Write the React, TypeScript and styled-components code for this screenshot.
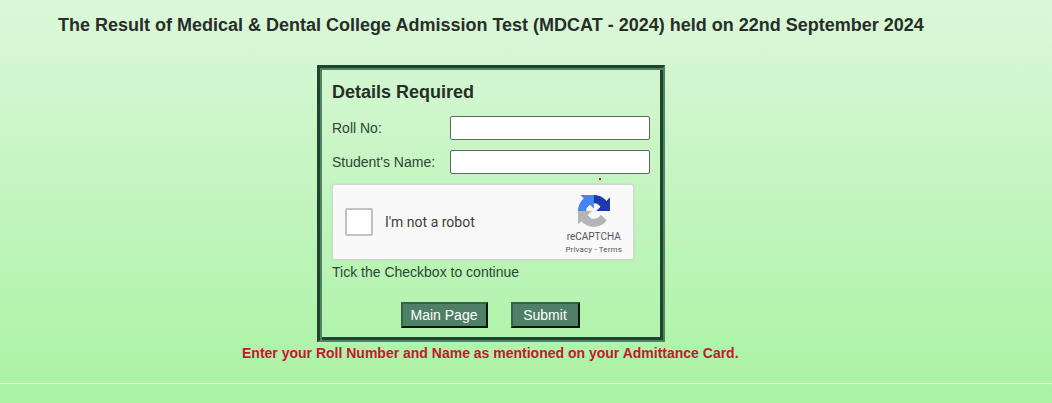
import React from "react";
import styled, { createGlobalStyle } from "styled-components";

const GlobalStyle = createGlobalStyle`
  html, body {
    margin: 0;
    padding: 0;
    height: 100%;
    overflow: hidden;
  }
  body {
    font-family: "Liberation Sans", Arial, sans-serif;
    color: #2b332b;
  }
`;

const Page = styled.div`
  display: flex;
  flex-direction: column;
  height: 403px;
  background: linear-gradient(180deg, #dcf7da 0%, #a9f3a3 100%);
`;

const Title = styled.h1`
  margin: 0;
  padding: 15px 0 0 58px;
  font-size: 18px;
  line-height: 21px;
  font-weight: bold;
  color: #262e28;
`;

// groove look: dark then mid green on top/left, mid then dark on right/bottom
const Panel = styled.form`
  box-sizing: border-box;
  width: 348px;
  height: 277px;
  margin: 29px 0 0 317px;
  padding: 13px 12px 0 12px;
  border-style: solid;
  border-width: 3px 2px 2px 3px;
  border-color: #1f452e #4f8363 #4f8363 #1f452e;
  box-shadow: inset 2px 2px 0 #4f8363, inset -3px -3px 0 #1f452e;
`;

const PanelTitle = styled.h2`
  margin: 0 0 13px;
  font-size: 18px;
  line-height: 22px;
  font-weight: bold;
  color: #262e28;
`;

const Field = styled.div`
  display: flex;
  align-items: center;
  margin-bottom: 10px;
`;

const Label = styled.label`
  width: 118px;
  font-size: 14px;
  color: #2f4534;
`;

const Input = styled.input`
  box-sizing: border-box;
  width: 200px;
  height: 24px;
  padding: 0 4px;
  background: #fff;
  border: 1px solid #5f665f;
  border-radius: 2px;
`;

const CaptchaRow = styled.div`
  position: relative;
`;

const RedDot = styled.span`
  position: absolute;
  left: 267px;
  top: -6px;
  width: 2px;
  height: 2px;
  background: #c2182f;
`;

const Captcha = styled.div`
  box-sizing: border-box;
  display: flex;
  align-items: center;
  width: 302px;
  height: 76px;
  padding: 0 12px;
  background: #f9f9f9;
  border: 1px solid #d6d6d6;
  border-radius: 3px;
  box-shadow: 0 0 3px rgba(0, 0, 0, 0.08);
  font-family: Roboto, "Liberation Sans", sans-serif;
`;

const CaptchaBox = styled.span`
  box-sizing: border-box;
  width: 28px;
  height: 28px;
  background: #fff;
  border: 2px solid #c1c1c1;
  border-radius: 2px;
`;

const CaptchaText = styled.span`
  margin-left: 12px;
  font-size: 14px;
  color: #3c3c3c;
`;

const CaptchaBrand = styled.div`
  display: flex;
  flex-direction: column;
  align-items: center;
  margin-left: auto;
  margin-right: -1px;
  padding-top: 6px;
`;

const BrandName = styled.span`
  margin-top: 4px;
  font-size: 10px;
  line-height: 12px;
  color: #555;
`;

const BrandLinks = styled.span`
  margin-top: 1px;
  font-size: 8px;
  line-height: 11px;
  letter-spacing: 0.15px;
  color: #555;
`;

const Hint = styled.p`
  margin: 4px 0 0;
  font-size: 14px;
  line-height: 16px;
  color: #2f4534;
`;

const Actions = styled.div`
  display: flex;
  gap: 23px;
  margin: 22px 0 0 69px;
`;

const ActionButton = styled.button<{ $width: number }>`
  box-sizing: border-box;
  width: ${({ $width }) => $width}px;
  height: 26px;
  padding: 0 1px 0 0;
  font-family: "Liberation Sans", Arial, sans-serif;
  font-size: 14px;
  color: #fff;
  background: #4f8065;
  border: 2px solid;
  border-color: #37624a #0c140f #0c140f #37624a;
`;

const Notice = styled.p`
  margin: 3px 0 0 242px;
  font-size: 14px;
  line-height: 16px;
  font-weight: bold;
  color: #c2182f;
`;

const Rule = styled.hr`
  width: 100%;
  height: 1px;
  margin: 22px 0 0;
  border: 0;
  background: #e6fbe4;
`;

const RecaptchaLogo: React.FC = () => (
  <svg width="32" height="32" viewBox="0 0 64 64" aria-hidden="true">
    <path d="M64 31.955l-.033-1.37V4.687l-7.16 7.16C50.948 4.674 42.033.093 32.05.093c-10.4 0-19.622 4.96-25.458 12.64l11.736 11.86a15.55 15.55 0 0 1 4.754-5.334c2.05-1.6 4.952-2.906 8.968-2.906.485 0 .86.057 1.135.163 4.976.393 9.288 3.14 11.828 7.124l-8.307 8.307c10.522-.04 22.4-.066 27.295.005" fill="#1c3aa9" />
    <path d="M31.9.002l-1.37.033H4.632l7.16 7.16C4.617 13.055.037 21.97.037 31.953c0 10.4 4.96 19.622 12.64 25.458l11.86-11.736a15.55 15.55 0 0 1-5.334-4.754c-1.6-2.05-2.906-4.952-2.906-8.968 0-.485.057-.86.163-1.135.393-4.976 3.14-9.288 7.124-11.828l8.307 8.307c-.04-10.522-.066-22.4.005-27.295" fill="#4285f4" />
    <path d="M.002 31.953l.033 1.37v25.898l7.16-7.16c5.86 7.173 14.774 11.754 24.758 11.754 10.4 0 19.622-4.96 25.458-12.64l-11.736-11.86a15.55 15.55 0 0 1-4.754 5.334c-2.05 1.6-4.952 2.906-8.968 2.906-.485 0-.86-.057-1.135-.163-4.976-.393-9.288-3.14-11.828-7.124l8.307-8.307c-10.522.04-22.4.066-27.295-.005" fill="#b5b5b5" />
  </svg>
);

const App: React.FC = () => {
  return (
    <Page>
      <GlobalStyle />
      <Title>
        The Result of Medical &amp; Dental College Admission Test (MDCAT - 2024) held on 22nd September 2024
      </Title>
      <Panel onSubmit={(e) => e.preventDefault()}>
        <PanelTitle>Details Required</PanelTitle>
        <Field>
          <Label htmlFor="roll">Roll No:</Label>
          <Input id="roll" type="text" />
        </Field>
        <Field>
          <Label htmlFor="name">Student's Name:</Label>
          <Input id="name" type="text" />
        </Field>
        <CaptchaRow>
          <RedDot />
          <Captcha>
            <CaptchaBox />
            <CaptchaText>I'm not a robot</CaptchaText>
            <CaptchaBrand>
              <RecaptchaLogo />
              <BrandName>reCAPTCHA</BrandName>
              <BrandLinks>Privacy - Terms</BrandLinks>
            </CaptchaBrand>
          </Captcha>
        </CaptchaRow>
        <Hint>Tick the Checkbox to continue</Hint>
        <Actions>
          <ActionButton $width={87} type="button">Main Page</ActionButton>
          <ActionButton $width={69} type="submit">Submit</ActionButton>
        </Actions>
      </Panel>
      <Notice>Enter your Roll Number and Name as mentioned on your Admittance Card.</Notice>
      <Rule />
    </Page>
  );
};

export default App;
